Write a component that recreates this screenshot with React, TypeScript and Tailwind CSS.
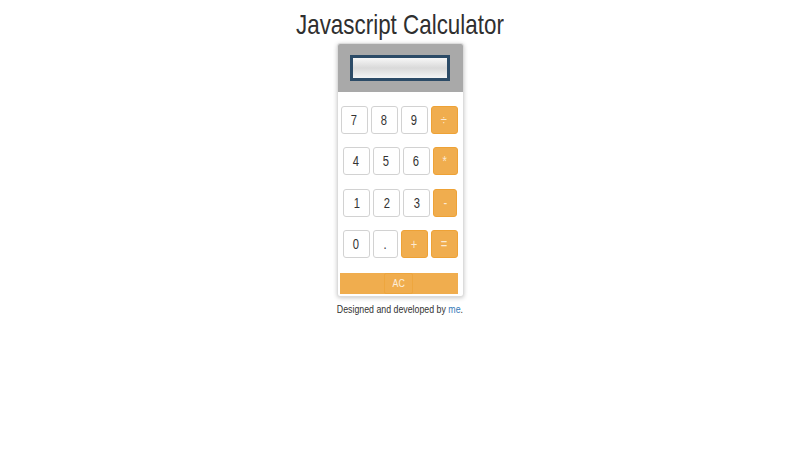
import React from "react";

type Key = { label: string; w: string; orange?: boolean };

const rows: { keys: Key[]; cls: string }[] = [
  {
    cls: "mt-[14px] pr-[2px]",
    keys: [
      { label: "7", w: "w-[27px]" },
      { label: "8", w: "w-[27px]" },
      { label: "9", w: "w-[27px]" },
      { label: "÷", w: "w-[27px]", orange: true },
    ],
  },
  {
    cls: "mt-[13px]",
    keys: [
      { label: "4", w: "w-[27px]" },
      { label: "5", w: "w-[27px]" },
      { label: "6", w: "w-[27px]" },
      { label: "*", w: "w-[25px]", orange: true },
    ],
  },
  {
    cls: "mt-[14px]",
    keys: [
      { label: "1", w: "w-[27px]" },
      { label: "2", w: "w-[27px]" },
      { label: "3", w: "w-[27px]" },
      { label: "-", w: "w-[24px]", orange: true },
    ],
  },
  {
    cls: "mt-[13px]",
    keys: [
      { label: "0", w: "w-[27px]" },
      { label: ".", w: "w-[25px]" },
      { label: "+", w: "w-[27px]", orange: true },
      { label: "=", w: "w-[27px]", orange: true },
    ],
  },
];

function CalcButton({ k }: { k: Key }) {
  return (
    <button
      className={`${k.w} h-[28px] rounded-[3px] border flex items-center justify-center text-[14px] ${
        k.orange
          ? "bg-[#f0ad4e] border-[#eea236] text-white/75"
          : "bg-white border-[#d2d2d2] text-[#333]"
      }`}
    >
      <span className="inline-block scale-x-80">{k.label}</span>
    </button>
  );
}

export default function App() {
  return (
    <div
      className="w-full min-h-[450px] bg-white flex flex-col items-center"
      style={{ fontFamily: '"Liberation Sans", Arial, sans-serif' }}
    >
      <h1 className="pt-[9px] text-[28px] leading-[32px] text-[#2f2f2f]">
        <span className="inline-block scale-x-80">Javascript Calculator</span>
      </h1>

      <div className="mt-[2px] w-[127px] border border-[#dcdcdc] rounded-[3px] bg-white shadow-[0_1px_4px_rgba(0,0,0,0.22)] flex flex-col pb-[2px]">
        <div className="h-[48px] bg-[#a9a9a9] rounded-t-[2px] pt-[11px] flex justify-center">
          <div className="w-[100px] h-[26px] border-[3px] border-[#2c4b67] bg-gradient-to-b from-[#f7f7f7] via-[#d9d9d9] to-[#f3f5f6]" />
        </div>

        {rows.map((row, i) => (
          <div key={i} className={`${row.cls} flex justify-center gap-[3px]`}>
            {row.keys.map((k) => (
              <CalcButton key={k.label} k={k} />
            ))}
          </div>
        ))}

        <div className="mt-[15px] ml-[2px] w-[118px] h-[21px] bg-[#f0ad4e] flex justify-center">
          <button className="h-full px-[6px] border border-[#eea63e] rounded-[2px] text-[11px] text-white/80 flex items-center">
            <span className="inline-block scale-x-80">AC</span>
          </button>
        </div>
      </div>

      <p className="mt-[4px] text-[11px] leading-[16px] text-[#333]">
        <span className="inline-block scale-x-80">
          Designed and developed by{" "}
          <a href="#" className="text-[#337ab7]">
            me
          </a>
          .
        </span>
      </p>
    </div>
  );
}
